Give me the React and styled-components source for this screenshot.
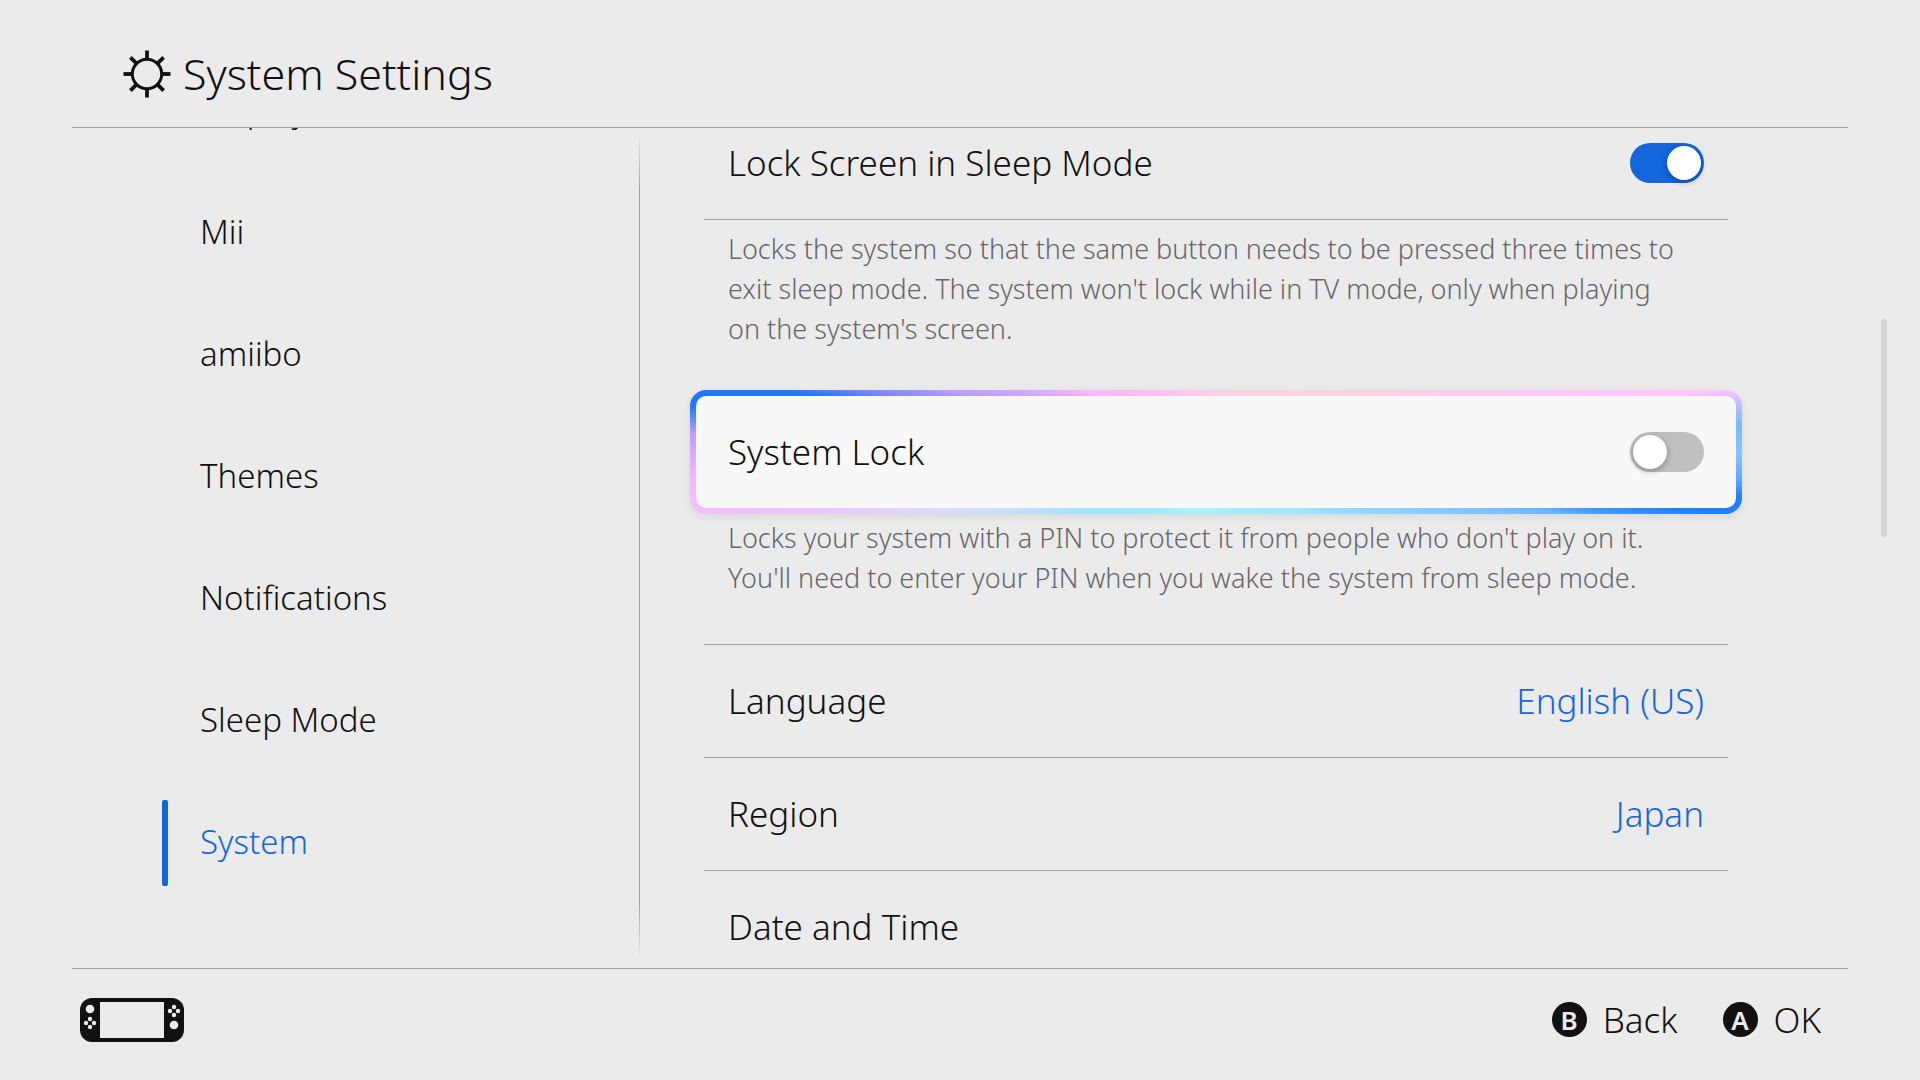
import React, { useState } from 'react'
import styled, { createGlobalStyle } from 'styled-components'

const menu = ['Display', 'Mii', 'amiibo', 'Themes', 'Notifications', 'Sleep Mode', 'System']

const rays = [0, 45, 90, 135, 180, 225, 270, 315]

const SettingsIcon = () => (
  <svg width="48" height="48" viewBox="0 0 48 48" fill="none" stroke="#111" aria-hidden="true">
    <circle cx="24" cy="24" r="14.7" strokeWidth="3" />
    {rays.map(r => (
      <path key={r} d="M24 9V0.5" strokeWidth="3.8" strokeLinecap="butt" transform={`rotate(${r} 24 24)`} />
    ))}
  </svg>
)

const Pad = ({ x, y }) => (
  <g>
    <circle cx={x} cy={y - 4} r="2.2" />
    <circle cx={x} cy={y + 4} r="2.2" />
    <circle cx={x - 4} cy={y} r="2.2" />
    <circle cx={x + 4} cy={y} r="2.2" />
  </g>
)

const ConsoleIcon = () => (
  <svg width="104" height="44" viewBox="0 0 104 44" fill="#ebebeb" aria-hidden="true">
    <rect width="104" height="44" rx="12" fill="#111" />
    <rect x="20" y="4" width="64" height="36" />
    <circle cx="10" cy="11" r="4.3" />
    <Pad x={10} y={25} />
    <Pad x={94} y={13} />
    <circle cx="94" cy="27" r="4.3" />
  </svg>
)

const App = () => {
  const [selected, setSelected] = useState('System')
  const [sleepLock, setSleepLock] = useState(true)
  const [systemLock, setSystemLock] = useState(false)

  return (
    <Root>
      <GlobalStyle />
      <Header>
        <SettingsIcon />
        <Title>System Settings</Title>
      </Header>

      <Body>
        <Menu>
          {menu.map(name => (
            <MenuItem key={name} $active={name === selected} onClick={() => setSelected(name)}>
              {name}
            </MenuItem>
          ))}
        </Menu>
        <Divider />

        <Content>
          <Options>
            <Row as="label">
              Lock Screen in Sleep Mode
              <Toggle checked={sleepLock} onChange={e => setSleepLock(e.target.checked)} />
            </Row>
            <Description>
              Locks the system so that the same button needs to be pressed three times to exit sleep mode.
              The system won't lock while in TV mode, only when playing on the system's screen.
            </Description>

            <FocusedRow as="label">
              System Lock
              <Toggle checked={systemLock} onChange={e => setSystemLock(e.target.checked)} />
            </FocusedRow>
            <Description $line>
              Locks your system with a PIN to protect it from people who don't play on it.
              You'll need to enter your PIN when you wake the system from sleep mode.
            </Description>

            <Row>
              Language
              <Value>English (US)</Value>
            </Row>
            <Row>
              Region
              <Value>Japan</Value>
            </Row>
            <Row>Date and Time</Row>
          </Options>
        </Content>

        <ScrollTrack>
          <ScrollThumb />
        </ScrollTrack>
      </Body>

      <Footer>
        <ConsoleIcon />
        <Hints>
          <Hint><Key>B</Key>Back</Hint>
          <Hint><Key>A</Key>OK</Hint>
        </Hints>
      </Footer>
    </Root>
  )
}

export default App

const GlobalStyle = createGlobalStyle`
  * {
    box-sizing: border-box;
  }
  body {
    margin: 0;
    background: #ebebeb;
    color: #111;
    font-family: "Noto Sans", sans-serif;
    font-weight: 300;
  }
  button {
    border: 0;
    padding: 0;
    background: none;
    color: inherit;
    font: inherit;
    text-align: left;
    cursor: pointer;
  }
`

const Root = styled.div`
  display: flex;
  flex-direction: column;
  height: 100vh;
  overflow: hidden;
`

const Header = styled.header`
  flex: none;
  display: flex;
  align-items: center;
  gap: 12px;
  height: 128px;
  margin: 0 72px;
  padding: 21px 51px 0;
  border-bottom: 1px solid #a0a0a0;
`

const Title = styled.h1`
  margin: 0;
  font-size: 43px;
  line-height: 56px;
  font-weight: 300;
`

const Body = styled.div`
  flex: 1;
  min-height: 0;
  display: flex;
`

const Menu = styled.nav`
  flex: none;
  display: flex;
  flex-direction: column;
  justify-content: flex-end;
  width: 567px;
  margin-left: 72px;
  padding: 0 90px 64px;
  overflow: hidden;
`

const MenuItem = styled.button`
  && {
    position: relative;
    flex: none;
    height: 122px;
    padding: 0 38px 2px;
    font-size: 33px;
    line-height: 44px;
    color: ${p => p.$active ? '#1466dc' : '#111'};
  }
  &::before {
    content: '';
    display: ${p => p.$active ? 'block' : 'none'};
    position: absolute;
    top: 18px;
    left: 0;
    width: 6px;
    height: 86px;
    border-radius: 2px;
    background: #1466dc;
  }
`

const Divider = styled.div`
  flex: none;
  width: 1px;
  margin: 4px 0 8px;
  background: linear-gradient(transparent, #a0a0a0 60px, #a0a0a0 calc(100% - 60px), transparent);
`

const Content = styled.main`
  flex: 1;
  min-width: 0;
  padding: 0 120px 0 64px;
  overflow: hidden;
`

const Options = styled.div`
  display: flex;
  flex-direction: column;
  margin-top: -21px;
`

const Row = styled.button`
  && {
    flex: none;
    display: flex;
    align-items: center;
    justify-content: space-between;
    height: 113px;
    padding: 0 24px;
    border-bottom: 1px solid #a0a0a0;
    font-size: 35px;
    line-height: 48px;
    cursor: pointer;
  }
`

const FocusedRow = styled(Row)`
  &&& {
    height: 124px;
    margin: -6px -14px -5px;
    padding: 0 32px;
    border: 6px solid transparent;
    border-radius: 16px;
    background:
      linear-gradient(#f8f8f8, #f8f8f8) padding-box,
      conic-gradient(
        #ffd0e6 0deg,
        #ffd3de 60deg,
        #ffd0e0 72deg,
        #fcc5ff 83deg,
        #78b8ff 87deg,
        #84c6ff 90deg,
        #60a8ff 93deg,
        #1f80ff 95deg,
        #1f80ff 97deg,
        #4a9cff 99deg,
        #6ab4ff 100deg,
        #80c2ff 102deg,
        #90d0ff 108deg,
        #a4e6ff 125deg,
        #acf0ff 200deg,
        #a0e4ff 246deg,
        #d8dcff 258deg,
        #f4bfff 263deg,
        #f8b8ff 267deg,
        #c09cff 272deg,
        #1f78ff 275deg,
        #1f78ff 278deg,
        #8488ff 280deg,
        #bba0ff 283deg,
        #ffb8fa 296deg,
        #ffd0e6 360deg
      ) border-box;
    box-shadow: 0 3px 10px rgba(0, 0, 0, 0.08);
  }
`

const Description = styled.p`
  margin: 0;
  padding: 9px 44px 46px 24px;
  border-bottom: 1px solid ${p => p.$line ? '#a0a0a0' : 'transparent'};
  font-size: 27px;
  line-height: 40px;
  color: #66666b;
`

const Value = styled.span`
  color: #1466dc;
`

const Toggle = styled.input.attrs({ type: 'checkbox', role: 'switch' })`
  appearance: none;
  display: flex;
  align-items: center;
  justify-content: ${p => p.checked ? 'flex-end' : 'flex-start'};
  width: 74px;
  height: 40px;
  margin: 0;
  padding: 0 3px;
  border-radius: 20px;
  background: ${p => p.checked ? '#1466dc' : '#bfbfbf'};
  cursor: pointer;

  &::before {
    content: '';
    width: 34px;
    height: 34px;
    border-radius: 50%;
    background: #fff;
    box-shadow: 0 2px 6px rgba(0, 0, 0, 0.3);
  }
`

const ScrollTrack = styled.div`
  flex: none;
  display: grid;
  grid-template-rows: 191fr 218fr 431fr;
  width: 6px;
  margin: 0 33px;
`

const ScrollThumb = styled.div`
  grid-row: 2;
  border-radius: 3px;
  background: #d3d3d5;
`

const Footer = styled.footer`
  flex: none;
  display: flex;
  align-items: center;
  justify-content: space-between;
  height: 112px;
  margin: 0 72px;
  padding: 0 27px 10px 8px;
  border-top: 1px solid #a0a0a0;
`

const Hints = styled.div`
  display: flex;
  gap: 45px;
`

const Hint = styled.button`
  && {
    display: flex;
    align-items: center;
    gap: 16px;
    font-size: 35px;
    line-height: 48px;
  }
`

const Key = styled.span`
  display: flex;
  align-items: center;
  justify-content: center;
  width: 35px;
  height: 35px;
  border-radius: 50%;
  background: #111;
  color: #ebebeb;
  font-size: 26px;
  line-height: 34px;
  font-weight: 600;
`
